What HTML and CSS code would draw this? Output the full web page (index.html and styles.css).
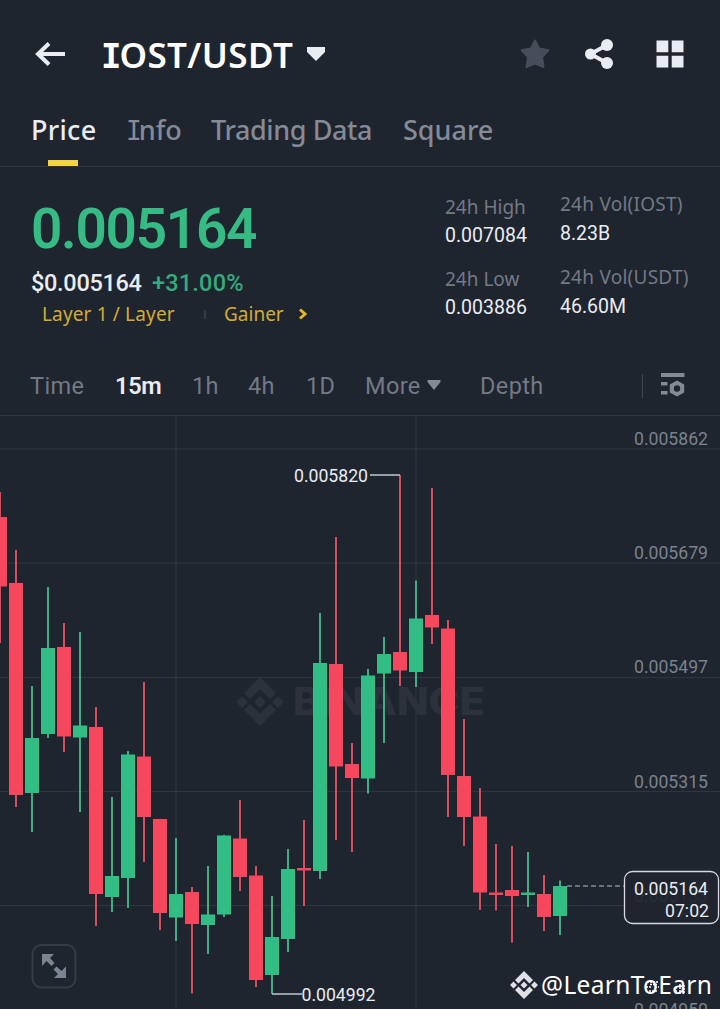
FILE: index.html
```html
<!DOCTYPE html>
<html lang="en">
<head>
    <meta charset="utf-8">
    <title>IOST/USDT</title>
    <link rel="stylesheet" href="styles.css">
</head>
<body>
    <header class="header">
        <svg class="back" width="32" height="26" viewBox="0 0 32 26">
            <path d="M14 2.500L3 13L14 23.500M3 13H30" />
        </svg>
        <h1 class="pair"><span class="slab">I</span>OST/USDT</h1>
        <svg class="icon caret" width="20" height="16" viewBox="0 0 20 16">
            <path d="M1 1H19V6L10 15L1 6Z" />
        </svg>
        <svg class="star" width="32" height="32" viewBox="0 0 32 32">
            <path d="M16 2.500L20.300 10.600L29.500 12.300L23 19L24.500 29L16 25.500L7.500 29L9 19L2.500 12.300L11.700 10.600Z" />
        </svg>
        <svg class="icon share" width="30" height="32" viewBox="0 0 30 32">
            <path class="share-line" d="M22 7L5.500 16L22 25" />
            <circle cx="22" cy="7" r="6" />
            <circle cx="5.500" cy="16" r="5.500" />
            <circle cx="22" cy="25" r="6" />
        </svg>
        <svg class="icon" width="28" height="28" viewBox="0 0 28 28">
            <path d="M.500 .500H12.300V12.300H.500ZM15.700 .500H27.500V12.300H15.700ZM.500 15.700H12.300V27.500H.500ZM15.700 15.700H27.500V27.500H15.700Z" />
        </svg>
    </header>

    <nav class="tabs">
        <a class="tab active">Price</a>
        <a class="tab"><span class="slab">I</span>nfo</a>
        <a class="tab wide">Trading Data</a>
        <a class="tab">Square</a>
    </nav>

    <section class="summary">
        <div class="price-block">
            <div class="price">0.005164</div>
            <div class="sub-price">
                <span class="usd">$0.005164</span>
                <span class="change">+31.00%</span>
            </div>
            <div class="tags">
                <span class="layer">Layer 1 / Layer</span>
                <span class="tag-line"></span>
                <span class="gainer">Gainer</span>
                <svg width="10" height="14" viewBox="0 0 10 14">
                    <path d="M1 2.500L6 7L1 11.500" />
                </svg>
            </div>
        </div>
        <dl class="stats">
            <dt>24h High</dt>
            <dd>0.007084</dd>
            <dt>24h Low</dt>
            <dd>0.003886</dd>
        </dl>
        <dl class="stats volume">
            <dt>24h Vol(IOST)</dt>
            <dd>8.23B</dd>
            <dt>24h Vol(USDT)</dt>
            <dd>46.60M</dd>
        </dl>
    </section>

    <nav class="intervals">
        <a>Time</a>
        <a class="active">15m</a>
        <a>1h</a>
        <a>4h</a>
        <a>1D</a>
        <a class="more">More</a>
        <svg class="muted arrow" width="14" height="10" viewBox="0 0 14 10">
            <path d="M.500 0H13.500V2L7 10L.500 2Z" />
        </svg>
        <a>Depth</a>
        <span class="tool-line"></span>
        <svg class="muted tool" width="25" height="26" viewBox="0 0 25 26">
            <path d="M0 1H23.500V5H0ZM0 10H6.500V13.500H0ZM0 19H6.500V22.500H0Z" />
            <path fill-rule="evenodd" d="M16 8.500L23.200 12.500V20.500L16 24.500L8.800 20.500V12.500ZM16 13.300A3.200 3.200 0 1 0 16 19.700A3.200 3.200 0 1 0 16 13.300Z" />
        </svg>
    </nav>

    <svg class="chart" width="720" height="594" viewBox="0 415 720 594">
        <path class="grid-line" d="M0 415.500H720M0 449H720M0 563H720M0 677.500H720M0 791.500H720M0 905.500H624M176 415V1009M416 415V1009" />

        <g class="watermark">
            <path d="M260 677L276 693L270 699L260 689L250 699L244 693ZM260 726L276 710L270 704L260 714L250 704L244 710ZM260 696L266 702L260 708L254 702ZM242 696L248 702L242 708L236 702ZM278 696L284 702L278 708L272 702Z" />
            <text x="293" y="715" textLength="192" lengthAdjust="spacingAndGlyphs">BINANCE</text>
        </g>

        <!-- wicks -->
        <path class="wick down" d="M0 492V643M16 550V807M64 623V752M96 707V926M144 682V862M160 819V930M192 887V993.500M240 800V891M256 866V987M304 820V906M336 537V840M352 743V852M400 475V686M432 488V644M448 620V817M464 719V846M480 788V910M496 844V910.500M512 846V942.500M544 875V931" />
        <path class="wick up" d="M32 686V832M48 587V738M80 632V812M112 797V912M128 751V908M176 838V941M208 866V954M224 835V917M272 896V994M288 849V952M320 613V879M368 669V793.500M384 637V743M416 580.500V687M528 852V907M560 880.500V935" />

        <!-- bodies -->
        <path class="body down" d="M0 517V586.500M16 583V795M64 647V736.500M96 727V894M144 756.500V817M160 819V913M192 892V924M240 838.500V877M256 875.500V980M304 868V870.500M336 664V766.500M352 764V778M400 652V670.500M432 615V627.500M448 628.500V775M464 776V817M480 816.500V892.500M496 892.500V895M512 890V896M544 894V917" />
        <path class="body up" d="M32 738V793M48 648V734M80 725.500V737.500M112 876V897M128 754.500V878M176 894V917.500M208 914.500V925M224 835.500V914.500M272 937V975M288 869V939M320 663V871M368 675.500V778.500M384 654V673.500M416 618.500V672M528 892.500V895M560 886V916" />

        <path class="callout" d="M370 475H400M272 994H302" />
        <text class="light" x="294" y="482" textLength="74" lengthAdjust="spacingAndGlyphs">0.005820</text>
        <text class="light" x="301.500" y="1001" textLength="74" lengthAdjust="spacingAndGlyphs">0.004992</text>

        <g class="axis">
            <text x="634" y="445" textLength="74" lengthAdjust="spacingAndGlyphs">0.005862</text>
            <text x="634" y="559" textLength="74" lengthAdjust="spacingAndGlyphs">0.005679</text>
            <text x="634" y="673" textLength="74" lengthAdjust="spacingAndGlyphs">0.005497</text>
            <text x="634" y="788" textLength="74" lengthAdjust="spacingAndGlyphs">0.005315</text>
            <text class="covered" x="634" y="902" textLength="74" lengthAdjust="spacingAndGlyphs">0.005133</text>
            <text x="634" y="1016" textLength="74" lengthAdjust="spacingAndGlyphs">0.004950</text>
        </g>

        <path class="last-line" d="M567 886H624" />
        <rect class="last-box" x="624.500" y="871.500" width="94" height="52" rx="8" />
        <text class="light" x="634" y="895" textLength="74" lengthAdjust="spacingAndGlyphs">0.005164</text>
        <text class="light" x="665" y="917" textLength="44" lengthAdjust="spacingAndGlyphs">07:02</text>

        <g class="expand">
            <rect x="32.500" y="945" width="43" height="42.500" rx="9" />
            <path d="M42 954H54L50 958L54.500 963L51.500 966L46.500 961L42 966ZM66 978H54L58 974L53.500 969.500L56.500 966.500L61.500 971L66 966.500Z" />
        </g>

        <g class="author">
            <path d="M524 971L533 980L529.500 983.500L524 978L518.500 983.500L515 980ZM524 999L533 990L529.500 986.500L524 992L518.500 986.500L515 990ZM524 981.500L527.500 985L524 988.500L520.500 985ZM513.500 981.500L517 985L513.500 988.500L510 985ZM534.500 981.500L538 985L534.500 988.500L531 985Z" />
            <text x="541" y="994" textLength="171">@LearnToEarn</text>
            <path class="speckle" d="M647 982H658M646 987H651M655 987H659M649 991H658M650 984.500H657M676 987V994M680 984V994M684 985V994" />
        </g>
    </svg>
</body>
</html>
```

FILE: styles.css
```css
* {
    box-sizing: border-box;
}
body {
    margin: 0;
    width: 720px;
    height: 1009px;
    overflow: hidden;
    background-color: #1f252f;
    color: #eaecf3;
    font-family: "Noto Sans", sans-serif;
}
svg {
    display: block;
}
.header {
    display: grid;
    grid-template-columns: 66px 205px 213px 66px 71px 28px;
    align-items: center;
    height: 108px;
    padding-left: 35px;
}
.icon {
    fill: #eaecf3;
}
.back {
    fill: none;
    stroke: #eaecf3;
    stroke-width: 4;
}
.star {
    fill: #474d59;
    stroke: #474d59;
    stroke-width: 2;
    stroke-linejoin: round;
}
.share-line {
    fill: none;
    stroke: #eaecf3;
    stroke-width: 4;
}
.pair {
    margin: 0;
    padding-top: 3px;
    color: white;
    font-size: 35px;
    font-weight: 600;
    line-height: 40px;
    letter-spacing: 0.4px;
    white-space: nowrap;
}
.slab {
    font-family: "DejaVu Sans Mono", monospace;
    font-size: 0.97em;
    letter-spacing: -2px;
}
.tabs {
    display: grid;
    grid-template-columns: 96px 84px 192px 120px;
    height: 59px;
    padding-left: 31px;
    border-bottom: 1px solid #303640;
}
.tab {
    color: #848a96;
    font-size: 27px;
    font-weight: 500;
    line-height: 43px;
    white-space: nowrap;
}
.tab .slab {
    margin-left: -1px;
    letter-spacing: -3px;
}
.tab.wide {
    letter-spacing: -0.4px;
}
.tab.active {
    color: #eaecf3;
    letter-spacing: 0.3px;
}
.tab.active::after {
    content: "";
    display: block;
    width: 30px;
    height: 6px;
    margin: 9px 0 0 17px;
    background-color: #f5d33f;
}
.summary {
    display: grid;
    grid-template-columns: 414px 115px 160px;
    height: 189px;
    padding-left: 31px;
    font-family: Roboto, sans-serif;
}
.price {
    height: 100px;
    padding-top: 29px;
    color: #36bb85;
    font-size: 55px;
    font-weight: 600;
    line-height: 66px;
    letter-spacing: -1.3px;
}
.sub-price {
    display: grid;
    grid-template-columns: 121px auto;
    font-size: 23.5px;
    font-weight: 500;
    line-height: 32px;
}
.usd {
    letter-spacing: -0.3px;
}
.change {
    color: #36aa7c;
    letter-spacing: 0.2px;
}
.tags {
    display: grid;
    grid-template-columns: 162px 20px 75px 10px;
    align-items: center;
    padding-left: 11px;
    color: #d3ac37;
    font-family: "Noto Sans", sans-serif;
    font-size: 19px;
    line-height: 30px;
}
.layer {
    letter-spacing: 0.15px;
}
.tags svg {
    fill: none;
    stroke: #e5b52f;
    stroke-width: 3;
}
.tag-line {
    width: 2px;
    height: 9px;
    background-color: #343b47;
}
.stats {
    margin: 0;
    padding-top: 26px;
}
.stats.volume {
    padding-top: 23px;
}
.stats dt {
    color: #737985;
    font-family: "Noto Sans", sans-serif;
    font-size: 19px;
    line-height: 28px;
    white-space: nowrap;
}
.stats.volume dt {
    letter-spacing: 0.25px;
}
.stats dd {
    height: 44px;
    margin: 0;
    font-size: 19.5px;
    line-height: 30px;
}
.stats.volume dd {
    height: 45px;
    line-height: 32px;
}
.intervals {
    display: grid;
    grid-template-columns: 85px 77px 56px 58px 59px 62px 53px 162px 19px 25px;
    align-items: center;
    height: 59px;
    padding-left: 30px;
    color: #737985;
    font-family: Roboto, sans-serif;
    font-size: 23.5px;
    letter-spacing: 0.4px;
}
.intervals .active {
    color: #eaecf3;
    font-weight: 600;
    letter-spacing: -0.3px;
}
.muted {
    fill: #848a96;
}
.arrow,
.tool {
    margin-bottom: 2px;
}
.tool-line {
    width: 1px;
    height: 24px;
    background-color: #414753;
}
.chart {
    font-family: Roboto, sans-serif;
    font-size: 18px;
}
.grid-line {
    stroke: #303640;
    stroke-width: 1;
}
.watermark {
    fill: #2c313c;
    font-family: Inter, sans-serif;
    font-size: 38px;
    font-weight: 800;
}
.wick {
    stroke-width: 2;
}
.body {
    stroke-width: 14;
}
.wick.up {
    stroke: #3fae83;
}
.wick.down {
    stroke: #d64c61;
}
.body.up {
    stroke: #32bd85;
}
.body.down {
    stroke: #f6475d;
}
.light {
    fill: #eaecf3;
}
.callout {
    stroke: #c3c6d0;
    stroke-width: 1.5;
}
.axis {
    fill: #7b818d;
}
.covered {
    opacity: 0.2;
}
.last-line {
    stroke: #b9bdc6;
    stroke-width: 1.2;
    stroke-dasharray: 5 3;
}
.last-box {
    fill: #1f252f;
    fill-opacity: 0.6;
    stroke: #d5d8e0;
    stroke-width: 1.3;
}
.expand rect {
    fill: none;
    stroke: #363c47;
    stroke-width: 2;
}
.expand path {
    fill: #7d8491;
}
.author {
    fill: white;
    font-family: "Noto Sans", sans-serif;
    font-size: 24.5px;
}
.author path {
    fill: #dfe1e6;
}
.author .speckle {
    fill: none;
    stroke: white;
    stroke-width: 1.5;
    stroke-dasharray: 2 1;
}
```
